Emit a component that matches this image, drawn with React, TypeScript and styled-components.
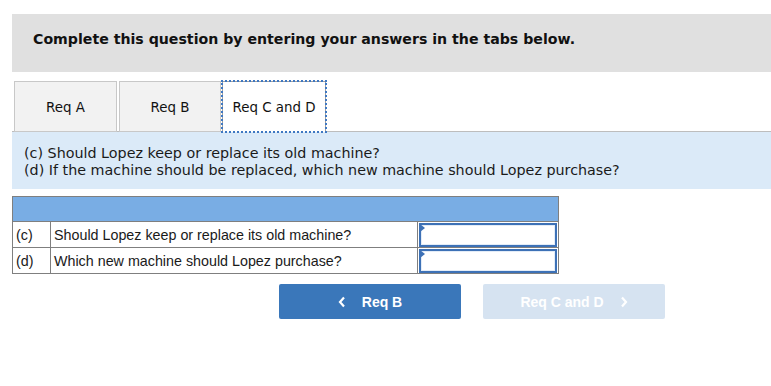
import * as React from 'react';
import styled, { createGlobalStyle } from 'styled-components';

const GlobalStyle = createGlobalStyle`
  html, body {
    margin: 0;
    padding: 0;
    background: #ffffff;
  }
  body {
    font-family: "DejaVu Sans", Verdana, sans-serif;
    color: #000000;
  }
`;

const Page = styled.div`
  padding: 14px 0 0 12px;
  width: 759px;
`;

const Instructions = styled.div`
  box-sizing: border-box;
  height: 58px;
  background: #e0e0e0;
  padding: 17px 0 0 21px;
  font-family: "DejaVu Sans", Verdana, sans-serif;
  font-weight: bold;
  font-size: 14.15px;
  line-height: 17px;
  color: #111;
`;

const TabBar = styled.div`
  display: flex;
  align-items: flex-end;
  margin-top: 9px;
  padding-left: 2px;
  border-bottom: 1px solid #bdbdbd;
`;

const Tab = styled.div<{ $active?: boolean; $width: number; $gap: number }>`
  box-sizing: border-box;
  width: ${p => p.$width}px;
  height: 51px;
  margin-right: ${p => p.$gap}px;
  margin-bottom: -1px;
  display: flex;
  align-items: center;
  justify-content: center;
  padding-top: 1px;
  font-size: 13.4px;
  color: #111;
  background: ${p => (p.$active ? '#ffffff' : '#f2f2f2')};
  border: 1px solid ${p => (p.$active ? '#a0a0a0' : '#c8c8c8')};
  border-bottom-color: ${p => (p.$active ? '#ffffff' : '#c8c8c8')};
  outline: ${p => (p.$active ? '2px dotted #3f78c2' : 'none')};
  outline-offset: -1px;
`;

const QuestionPanel = styled.div`
  background: #dbeaf8;
  padding: 13px 12px 10px;
  font-size: 14.3px;
  line-height: 17px;
  color: #1a1a1a;
`;

const Table = styled.table`
  margin-top: 7px;
  width: 547px;
  border-collapse: collapse;
  font-family: "Liberation Sans", Arial, sans-serif;
  font-size: 14.3px;
  color: #1a1a1a;
`;

const HeadCell = styled.td`
  height: 24px;
  padding: 0;
  background: #79ade4;
  border: 1px solid #7f7f7f;
`;

const Cell = styled.td<{ $width?: number }>`
  height: 25px;
  padding: 0 0 0 3px;
  border: 1px solid #7f7f7f;
  width: ${p => (p.$width ? `${p.$width}px` : 'auto')};
`;

const InputCell = styled.td`
  width: 138px;
  height: 25px;
  padding: 0 1px;
  border: 1px solid #7f7f7f;
`;

const AnswerBox = styled.div`
  position: relative;
  box-sizing: border-box;
  height: 24px;
  background: #ffffff;
  border: 2px solid #3d71b6;
  box-shadow: inset 0 0 0 1px #e3ecf7;

  &::before {
    content: '';
    position: absolute;
    left: -1px;
    top: -1px;
    border-style: solid;
    border-width: 4px 0 4px 5px;
    border-color: transparent transparent transparent #3d71b6;
  }
`;

const NavRow = styled.div`
  display: flex;
  gap: 22px;
  margin-top: 10px;
  padding-left: 267px;
`;

const NavButton = styled.div<{ $disabled?: boolean }>`
  box-sizing: border-box;
  width: 182px;
  height: 35px;
  border-radius: 2px;
  display: flex;
  align-items: center;
  justify-content: center;
  gap: 16px;
  font-family: "Liberation Sans", Arial, sans-serif;
  font-weight: bold;
  font-size: 14px;
  color: #ffffff;
  background: ${p => (p.$disabled ? '#d6e3f1' : '#3a77ba')};
`;

const Chevron: React.FC<{ dir: 'left' | 'right' }> = ({ dir }) => (
  <svg width="8" height="12" viewBox="0 0 8 12">
    <path
      d={dir === 'left' ? 'M6 1.5 L2 6 L6 10.5' : 'M2 1.5 L6 6 L2 10.5'}
      fill="none"
      stroke="#ffffff"
      strokeWidth="2.2"
    />
  </svg>
);

const rows = [
  { key: '(c)', text: 'Should Lopez keep or replace its old machine?' },
  { key: '(d)', text: 'Which new machine should Lopez purchase?' },
];

const App: React.FC = () => {
  return (
    <Page>
      <GlobalStyle />
      <Instructions>Complete this question by entering your answers in the tabs below.</Instructions>
      <TabBar>
        <Tab $width={103} $gap={2}>Req A</Tab>
        <Tab $width={102} $gap={1}>Req B</Tab>
        <Tab $width={104} $gap={0} $active>Req C and D</Tab>
      </TabBar>
      <QuestionPanel>
        <div>(c) Should Lopez keep or replace its old machine?</div>
        <div>(d) If the machine should be replaced, which new machine should Lopez purchase?</div>
      </QuestionPanel>
      <Table>
        <tbody>
          <tr>
            <HeadCell colSpan={3} />
          </tr>
          {rows.map(row => (
            <tr key={row.key}>
              <Cell $width={34}>{row.key}</Cell>
              <Cell>{row.text}</Cell>
              <InputCell>
                <AnswerBox />
              </InputCell>
            </tr>
          ))}
        </tbody>
      </Table>
      <NavRow>
        <NavButton>
          <Chevron dir="left" />
          <span>Req B</span>
        </NavButton>
        <NavButton $disabled>
          <span>Req C and D</span>
          <Chevron dir="right" />
        </NavButton>
      </NavRow>
    </Page>
  );
};

export default App;
